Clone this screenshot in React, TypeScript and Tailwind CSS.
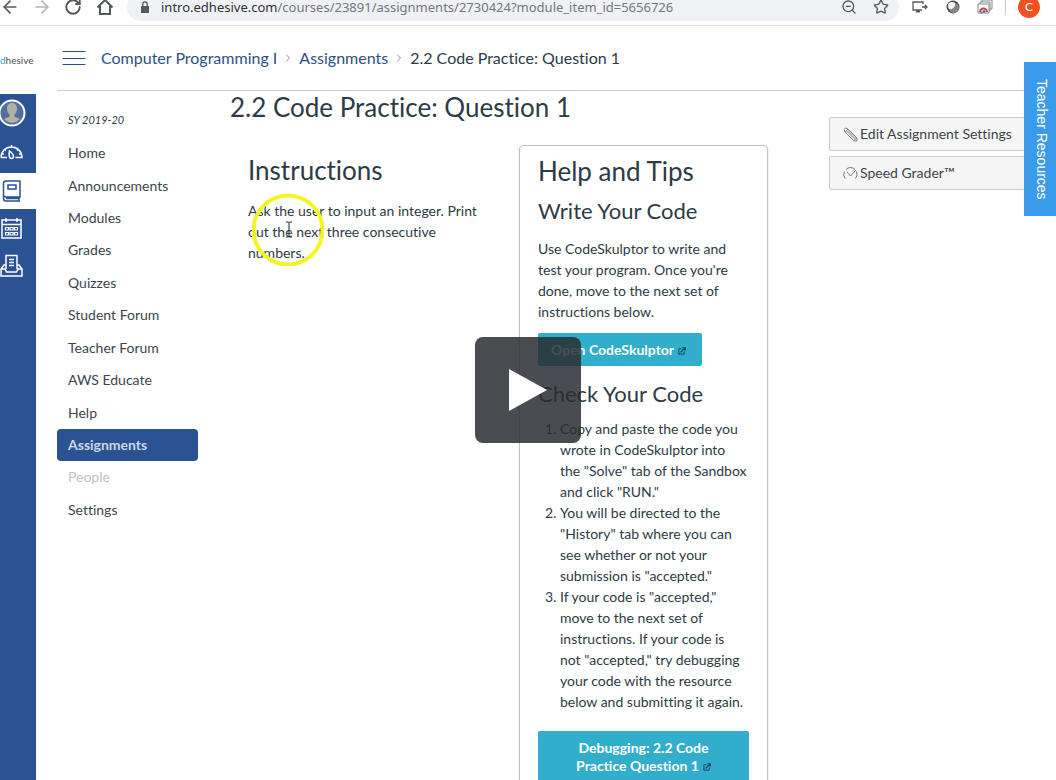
import type { ReactNode } from 'react';
import { ArrowLeft, ArrowRight, ChevronRight, RotateCw, Star, ZoomOut } from 'lucide-react';

const courseLinks = [
  'Home',
  'Announcements',
  'Modules',
  'Grades',
  'Quizzes',
  'Student Forum',
  'Teacher Forum',
  'AWS Educate',
  'Help',
  'Assignments',
  'People',
  'Settings',
];

const steps = [
  'Copy and paste the code you wrote in CodeSkulptor into the "Solve" tab of the Sandbox and click "RUN."',
  'You will be directed to the "History" tab where you can see whether or not your submission is "accepted."',
  'If your code is "accepted," move to the next set of instructions. If your code is not "accepted," try debugging your code with the resource below and submitting it again.',
];

function ExternalIcon() {
  return (
    <svg aria-hidden="true" className="ml-1 inline-block h-2 w-2 text-[#153f50]" fill="none" stroke="currentColor" viewBox="0 0 9 9">
      <path d="M4 2H1v6h6V5" />
      <path d="M3 6l5-5M5 .8h3.2V4" strokeWidth="1.3" />
    </svg>
  );
}

function BrowserBar() {
  return (
    <header className="relative flex h-[26px] shrink-0 items-center border-b border-[#d5dbe1] bg-white pb-3 text-[#55585c]">
      <nav aria-label="Browser" className="flex w-[127px] items-center gap-3">
        <button aria-label="Back" type="button">
          <ArrowLeft size={20} />
        </button>
        <button aria-label="Forward" className="text-[#b4b6b8]" type="button">
          <ArrowRight size={20} />
        </button>
        <button aria-label="Reload" type="button">
          <RotateCw size={18} strokeWidth={2.5} />
        </button>
        <button aria-label="Home page" type="button">
          <svg className="h-[18px] w-5" fill="none" stroke="currentColor" strokeWidth="2" viewBox="-2 0 20 18">
            <path d="M4 8v8h10V8M1.500 9.500 9 2l7.500 7.500" />
          </svg>
        </button>
      </nav>
      <div className="flex h-7 min-w-0 flex-1 items-center rounded-full bg-[#eff1f4] px-3">
        <svg aria-hidden="true" className="mr-2.5 h-3 w-3 shrink-0" viewBox="0 0 12 12">
          <path d="M2 5h8v7H2z" fill="currentColor" />
          <path d="M3.800 5V3a2.200 2.200 0 0 1 4.400 0v2" fill="none" stroke="currentColor" strokeWidth="1.300" />
        </svg>
        <p className="flex-1 font-['Noto_Sans',sans-serif] text-[13px] leading-[14px] whitespace-nowrap text-[#74777b]">
          <span className="text-[#2f3235]">intro.edhesive.com</span>/courses/23891/assignments/2730424?module_item_id=5656726
        </p>
        <button aria-label="Zoom" className="mr-4" type="button">
          <ZoomOut size={16} />
        </button>
        <button aria-label="Bookmark" className="-mr-0.5" type="button">
          <Star size={16} />
        </button>
      </div>
      <div className="flex w-[157px] items-center pl-3">
        <svg aria-hidden="true" className="mr-4 h-4 w-[18px]" fill="none" stroke="currentColor" strokeWidth="1.300" viewBox="0 0 18 16">
          <path d="M11 11H2V3h10v2M7 11v2M11 8h5M14 6l2 2-2 2" />
          <path d="M5 12.500h4" strokeWidth="2" />
        </svg>
        <svg aria-hidden="true" className="mr-4 h-4 w-4" viewBox="0 0 16 16">
          <circle cx="8" cy="8" fill="#4b4d50" r="6.500" />
          <circle cx="7" cy="7" fill="#f1f1f1" r="4" />
          <path d="M4 10a5 5 0 0 0 6-6 5 5 0 1 1-6 6z" fill="#85888b" />
        </svg>
        <svg aria-hidden="true" className="mr-3 h-4 w-4" fill="none" viewBox="0 0 16 16">
          <path d="M5 3V1h10v9h-2" stroke="#85898d" />
          <path d="M3 5V3h10v9h-1" stroke="#85898d" />
          <path d="M1 5h11v9H1z" fill="#fff" stroke="#85898d" />
          <path d="M3 13a3.500 3.500 0 0 1 7 0" stroke="#dc3b3a" strokeWidth="2" />
          <path d="M3.500 13.500h2" stroke="#3c9a57" strokeWidth="2" />
          <circle cx="7" cy="12.500" fill="#3c78d8" r="1.500" />
        </svg>
        <span className="mr-3 h-4 w-px bg-[#c5c9cd]" />
        <button aria-label="Profile" className="h-[22px] w-[22px] rounded-full bg-[#f1501f] text-xs text-white" type="button">
          C
        </button>
      </div>
    </header>
  );
}

function RailLink({ label, active, children }: { label: string; active?: boolean; children: ReactNode }) {
  return (
    <a
      aria-label={label}
      className={active ? 'flex h-9 items-center bg-white text-[#2d5394]' : 'flex h-[38px] items-center text-white'}
      href="#"
    >
      <svg className="h-6 w-6" fill="none" stroke="currentColor" strokeWidth="1.500" viewBox="0 0 24 24">
        {children}
      </svg>
    </a>
  );
}

function GlobalRail() {
  return (
    <nav aria-label="Global" className="flex flex-1 flex-col bg-[#2b5394]">
      <a aria-label="Account" className="flex h-[41px] items-center pb-1" href="#">
        <svg className="h-7 w-[26px]" viewBox="0 0 26 28">
          <circle cx="12" cy="14" fill="#526f9e" r="12.500" stroke="#fff" strokeWidth="2" />
          <path d="M12 4c-3.500 0-5 2.500-5 5.500 0 3 1 4.500 2.500 6v2L4 20a10.500 10.500 0 0 0 16 0l-5.500-2.500v-2c1.500-1.500 2.500-3 2.500-6C17 6.500 15.500 4 12 4z" fill="#b3b0a8" />
        </svg>
      </a>
      <RailLink label="Dashboard">
        <path d="M1 15.500a10.500 10.500 0 1 1 21 0h-6.500M1 15.500h6M11.500 3v3M4 7l2 1.500M19 7l-2 1.500M2 12h2M19 12h2" />
        <path d="M9.500 9c2 1.500 4 3.500 4 5.500a2 2 0 0 1-4 0c-.5-2-.5-4 0-5.500z" />
      </RailLink>
      <RailLink active label="Courses">
        <path d="M6 2h14v16H6a2.500 2.500 0 0 1-2.500-2.500v-11A2.500 2.500 0 0 1 6 2zM8 6h8v4H8zM3.500 15.500v4A2.500 2.500 0 0 0 6 22h14M6 19.500h13v2.500" />
      </RailLink>
      <RailLink label="Calendar">
        <path d="M2 4h19v18H2zM2 8.500h19M6 2v4M17 2v4" />
        <path d="M5.500 11.500h3v2.500h-3zM10 11.500h3v2.500h-3zM14.500 11.500h3v2.500h-3zM5.500 16.500h3V19h-3zM10 16.500h3V19h-3zM14.500 16.500h3V19h-3z" strokeWidth="1.200" />
      </RailLink>
      <RailLink label="Inbox">
        <path d="M6 15V1.500h11V15M9 5.500h5M9 8.500h5M9 11.500h5M6 11H4l-3 4v7h21v-7l-3-4h-2M1 15h4l1.500 3h10L18 15h4" />
      </RailLink>
    </nav>
  );
}

function CourseNav() {
  return (
    <nav aria-label="Course" className="w-[141px] shrink-0 pt-5">
      <p className="mb-2 pl-[11px] text-[11px] leading-[18px] text-[#333b44] italic">SY 2019-20</p>
      <ul className="grid h-[389px] auto-rows-fr">
        {courseLinks.map((name) => (
          <li className="flex" key={name}>
            <a
              aria-current={name === 'Assignments' ? 'page' : undefined}
              className={
                name === 'Assignments'
                  ? 'flex flex-1 items-center rounded-sm bg-[#2b5394] pl-[11px] font-bold text-[#ccd7ea]'
                  : name === 'People'
                    ? 'flex flex-1 items-center pl-[11px] text-[#bfc2c5]'
                    : 'flex flex-1 items-center pl-[11px] text-[#3d454c]'
              }
              href="#"
            >
              {name}
            </a>
          </li>
        ))}
      </ul>
    </nav>
  );
}

function HelpCard() {
  return (
    <aside className="rounded-sm border border-[#bfc3c7] px-[18px] pt-[9px] pb-6 shadow-sm">
      <h2 className="text-[26px] leading-8">Help and Tips</h2>
      <h3 className="mt-3 text-[22px] leading-6">Write Your Code</h3>
      <p className="mt-[15px] leading-[21px]">
        Use CodeSkulptor to write and test your program. Once you're done, move to the next set of instructions below.
      </p>
      <a className="mt-[11px] inline-block rounded-xs bg-[#31aecb] py-2 pr-4 pl-[13px] leading-[17px] font-bold text-white" href="#">
        Open CodeSkulptor
        <ExternalIcon />
      </a>
      <h3 className="mt-4 text-[22px] leading-6">Check Your Code</h3>
      <ol className="mt-3 list-decimal pr-0.5 pl-[22px] leading-[21px]">
        {steps.map((step) => (
          <li key={step}>{step}</li>
        ))}
      </ol>
      <a className="mt-[19px] block rounded-xs bg-[#31aecb] px-6 py-2 text-center leading-[18px] font-bold text-white" href="#">
        Debugging: 2.2 Code Practice Question 1
        <ExternalIcon />
      </a>
    </aside>
  );
}

function Assignment() {
  return (
    <main className="min-w-0 flex-1 pl-8">
      <h1 className="text-[26px] leading-8">2.2 Code Practice: Question 1</h1>
      <div className="mt-[22px] grid grid-cols-[235fr_249fr] gap-9 pl-[18px]">
        <section className="pt-[9px]">
          <h2 className="text-[26px] leading-8">Instructions</h2>
          <div className="relative mt-[14px]">
            <p className="leading-[21px]">Ask the user to input an integer. Print out the next three consecutive numbers.</p>
            <svg aria-hidden="true" className="absolute -top-2 left-1 h-[74px] w-[74px]" fill="none" viewBox="0 0 74 74">
              <circle cx="36" cy="38" r="34.500" stroke="#f5f526" strokeWidth="4" />
              <path d="M34 30h2.500l.5.500.5-.5H40M37 30.500v14M34 45h2.500l.5-.5.500.5H40" stroke="#222" />
            </svg>
          </div>
        </section>
        <HelpCard />
      </div>
    </main>
  );
}

function Tools() {
  return (
    <div className="ml-[61px] flex w-[203px] shrink-0 flex-col gap-[5px] pt-[26px]">
      <button className="flex h-[34px] items-center rounded-xs border border-[#c7cdd1] bg-[#f5f5f5] pl-[13px] text-[#3d454c]" type="button">
        <svg aria-hidden="true" className="mr-0.5 h-[15px] w-[15px]" fill="none" stroke="#666b70" strokeWidth="0.800" viewBox="0 0 15 15">
          <path d="M1 2.500 2.500 1 5 2l9 9v3h-3L2 5zM2 5l3-3M3.500 4l8.500 8.500M11 13.500l2.500-2.500M5 3.500l7.500 7.500" />
        </svg>
        Edit Assignment Settings
      </button>
      <button className="flex h-[34px] items-center rounded-xs border border-[#c7cdd1] bg-[#f5f5f5] pl-[13px] text-[#3d454c]" type="button">
        <svg aria-hidden="true" className="mr-0.5 h-[15px] w-[15px]" fill="none" stroke="#777c80" viewBox="0 0 15 15">
          <path d="M2 12.500a6.500 6.500 0 0 1-.5-7M3 3.500a6 6 0 0 1 9 0M13.500 5.500a7 7 0 0 1-1 7" />
          <path d="M4 6l3.500 4L13 4" />
        </svg>
        Speed Grader™
      </button>
    </div>
  );
}

export default function App() {
  return (
    <div className="relative flex h-screen flex-col overflow-hidden bg-white font-[Lato,sans-serif] text-sm text-[#2d3b45] [font-variant-ligatures:none]">
      <BrowserBar />
      <div className="flex min-h-0 flex-1">
        <div className="flex w-9 shrink-0 flex-col">
          <p className="flex h-[68px] items-center text-[10px] text-[#4a4d50]">
            <span className="text-[#2aa6d0]">d</span>hesive
          </p>
          <GlobalRail />
        </div>
        <div className="ml-[21px] min-w-0 flex-1">
          <div className="flex h-[65px] items-center border-b border-[#c7cdd1] pl-[5px] text-base">
            <button aria-label="Course menu" className="mr-[15px] text-[#2b4f8f]" type="button">
              <svg className="h-4 w-6" stroke="currentColor" strokeWidth="1" viewBox="0 0 24 16">
                <path d="M.5 1.500h23M.5 8.500h23M.5 14.500h23" />
              </svg>
            </button>
            <nav aria-label="Breadcrumb" className="flex items-center gap-[5px]">
              <a className="text-[#2f4f88]" href="#">
                Computer Programming I
              </a>
              <ChevronRight className="text-[#888c90]" size={12} />
              <a className="text-[#2f4f88]" href="#">
                Assignments
              </a>
              <ChevronRight className="text-[#888c90]" size={12} />
              <span>2.2 Code Practice: Question 1</span>
            </nav>
          </div>
          <div className="flex pr-6">
            <CourseNav />
            <Assignment />
            <Tools />
          </div>
        </div>
      </div>
      <button
        className="absolute top-[62px] right-0 flex h-[154px] w-8 items-center justify-center bg-[#3a9bea] pl-[3px] font-['Liberation_Sans',sans-serif] text-sm text-white [writing-mode:vertical-rl]"
        type="button"
      >
        Teacher Resources
      </button>
      <button
        aria-label="Play video"
        className="absolute top-1/2 left-1/2 flex h-[106px] w-[106px] -translate-x-1/2 -translate-y-1/2 items-center justify-center rounded-lg bg-[#292d31]/85"
        type="button"
      >
        <svg className="h-[42px] w-[38px] fill-white" viewBox="0 0 38 42">
          <path d="M0 0v42l38-21z" />
        </svg>
      </button>
    </div>
  );
}
